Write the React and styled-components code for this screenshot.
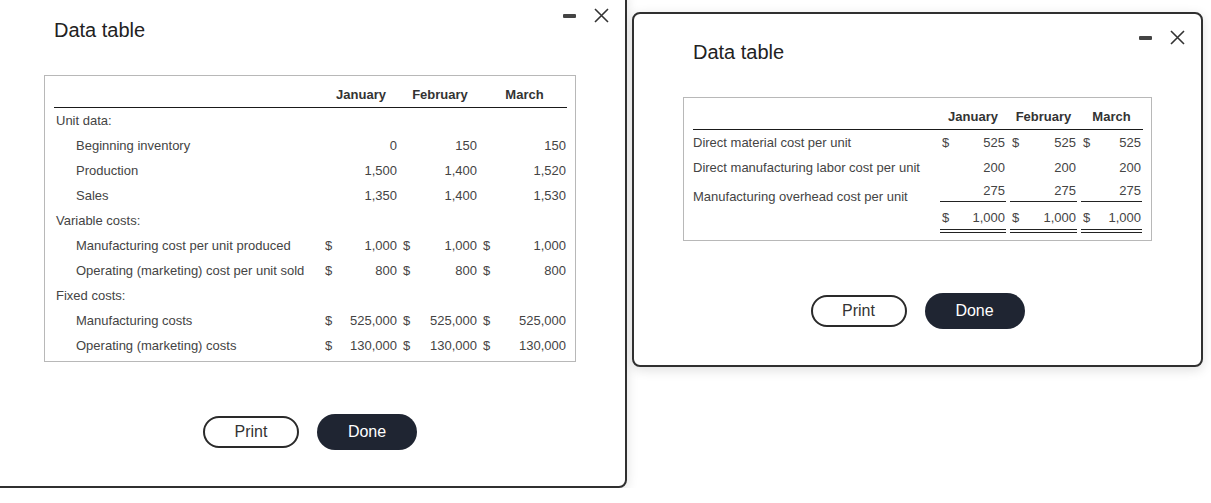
import React from 'react'
import styled, { createGlobalStyle } from 'styled-components'

const GlobalStyle = createGlobalStyle`
body {
  margin: 0;
  background: #fff;
  font-family: "Liberation Sans", Arial, sans-serif;
  overflow: hidden;
}
`

const Desktop = styled.div`
display: flex;
align-items: flex-start;
`

const Window = styled.section`
flex: none;
box-sizing: border-box;
width: ${p => p.$width}px;
margin: ${p => p.$margin};
background: #fff;
border: 2px solid #303030;
border-radius: 8px;
box-shadow: 0 3px 12px rgba(0, 0, 0, 0.13);
display: flex;
flex-direction: column;
`

const Header = styled.header`
display: flex;
justify-content: space-between;
align-items: flex-start;
padding: 0 16px 0 59px;
`

const Title = styled.h2`
margin: 26px 0 0;
font-size: 20px;
line-height: 24px;
font-weight: 400;
color: #222;
`

const Controls = styled.div`
display: flex;
align-items: center;
gap: 18px;
margin-top: 16px;
height: 15px;
`

const MinimizeBar = styled.span`
display: block;
width: 13px;
height: 4px;
border-radius: 1px;
background: #444;
`

const IconButton = styled.button`
display: flex;
padding: 0;
border: none;
background: none;
cursor: pointer;
`

const TableBox = styled.div`
margin: 33px 49px 0;
border: 1px solid #b8b8b8;
padding: 8px 8px ${p => p.$padBottom}px 9px;
`

const Row = styled.div`
display: grid;
grid-template-columns: ${p => p.$cols};
column-gap: ${p => p.$gap}px;
align-items: start;
font-size: 13px;
line-height: 15px;
color: #444;
`

const HeadRow = styled(Row)`
padding: 3px 0 5px;
border-bottom: 1px solid #1a1a1a;
font-weight: 700;
color: #333;
`

const MonthHead = styled.div`
text-align: center;
white-space: nowrap;
`

const Label = styled.div`
padding: ${p => p.$top ?? 5}px 0 ${p => p.$bottom ?? 5}px ${p => p.$indent}px;
white-space: nowrap;
`

const MoneyCell = styled.div`
display: flex;
justify-content: space-between;
padding: ${p => p.$top}px ${p => p.$padRight}px ${p => p.$bottom}px ${p => p.$padLeft}px;
border-bottom: ${p => p.$rule === 'double' ? '4px double #222' : p.$rule === 'single' ? '1px solid #222' : 'none'};
white-space: nowrap;
`

const ButtonRow = styled.div`
display: flex;
justify-content: center;
align-items: center;
gap: 18px;
margin-top: 52px;
padding-bottom: 36px;
`

const PrintButton = styled.button`
box-sizing: border-box;
width: 96px;
height: 32px;
border: 2px solid #2a2a2a;
border-radius: 16px;
background: #fff;
color: #333;
font-family: "Liberation Sans", Arial, sans-serif;
font-size: 16px;
cursor: pointer;
`

const DoneButton = styled.button`
width: 100px;
height: 36px;
border: none;
border-radius: 18px;
background: #1f2532;
color: #fff;
font-family: "Liberation Sans", Arial, sans-serif;
font-size: 16px;
cursor: pointer;
`

const CloseIcon = () => (
  <svg width="15" height="15" viewBox="0 0 15 15">
    <path d="M1 1 L14 14 M14 1 L1 14" stroke="#333" strokeWidth="1.6" fill="none" />
  </svg>
)

const months = ['January', 'February', 'March']

const WindowChrome = ({ children }) => (
  <>
    <Header>
      <Title>Data table</Title>
      <Controls>
        <IconButton aria-label="minimize"><MinimizeBar /></IconButton>
        <IconButton aria-label="close"><CloseIcon /></IconButton>
      </Controls>
    </Header>
    {children}
    <ButtonRow>
      <PrintButton>Print</PrintButton>
      <DoneButton>Done</DoneButton>
    </ButtonRow>
  </>
)

const unitRows = [
  { group: 'Unit data:' },
  { label: 'Beginning inventory', values: ['0', '150', '150'] },
  { label: 'Production', values: ['1,500', '1,400', '1,520'] },
  { label: 'Sales', values: ['1,350', '1,400', '1,530'] },
  { group: 'Variable costs:' },
  { label: 'Manufacturing cost per unit produced', dollar: true, values: ['1,000', '1,000', '1,000'] },
  { label: 'Operating (marketing) cost per unit sold', dollar: true, values: ['800', '800', '800'] },
  { group: 'Fixed costs:' },
  { label: 'Manufacturing costs', dollar: true, values: ['525,000', '525,000', '525,000'] },
  { label: 'Operating (marketing) costs', dollar: true, values: ['130,000', '130,000', '130,000'] },
]

const leftCols = '265px 72px 74px 83px'

const BudgetTable = () => (
  <TableBox $padBottom={3}>
    <HeadRow $cols={leftCols} $gap={6}>
      <div />
      {months.map(m => <MonthHead key={m}>{m}</MonthHead>)}
    </HeadRow>
    {unitRows.map((row, i) => (
      <Row key={i} $cols={leftCols} $gap={6}>
        {row.group ? (
          <Label $indent={2}>{row.group}</Label>
        ) : (
          <>
            <Label $indent={22}>{row.label}</Label>
            {row.values.map((v, j) => (
              <MoneyCell key={j} $top={5} $bottom={5} $padLeft={0} $padRight={0}>
                <span>{row.dollar ? '$' : ''}</span>
                <span>{v}</span>
              </MoneyCell>
            ))}
          </>
        )}
      </Row>
    ))}
  </TableBox>
)

const costRows = [
  { label: 'Direct material cost per unit', dollar: true, values: ['525', '525', '525'] },
  { label: 'Direct manufacturing labor cost per unit', values: ['200', '200', '200'] },
  { label: 'Manufacturing overhead cost per unit', values: ['275', '275', '275'], rule: 'single', labelTop: 9, labelBottom: 0, top: 3, bottom: 3 },
  { label: '', dollar: true, values: ['1,000', '1,000', '1,000'], rule: 'double', top: 6, bottom: 4 },
]

const rightCols = '243px 66px 67px 61px'

const CostTable = () => (
  <TableBox $padBottom={7}>
    <HeadRow $cols={rightCols} $gap={4}>
      <div />
      {months.map(m => <MonthHead key={m}>{m}</MonthHead>)}
    </HeadRow>
    {costRows.map((row, i) => (
      <Row key={i} $cols={rightCols} $gap={4}>
        <Label $indent={0} $top={row.labelTop} $bottom={row.labelBottom}>{row.label}</Label>
        {row.values.map((v, j) => (
          <MoneyCell
            key={j}
            $top={row.top ?? 5}
            $bottom={row.bottom ?? 5}
            $padLeft={2}
            $padRight={1}
            $rule={row.rule}
          >
            <span>{row.dollar ? '$' : ''}</span>
            <span>{v}</span>
          </MoneyCell>
        ))}
      </Row>
    ))}
  </TableBox>
)

const App = () => (
  <>
    <GlobalStyle />
    <Desktop>
      <Window $width={634} $margin="-10px 0 0 -7px">
        <WindowChrome>
          <BudgetTable />
        </WindowChrome>
      </Window>
      <Window $width={571} $margin="12px 0 0 5px">
        <WindowChrome>
          <CostTable />
        </WindowChrome>
      </Window>
    </Desktop>
  </>
)

export default App
